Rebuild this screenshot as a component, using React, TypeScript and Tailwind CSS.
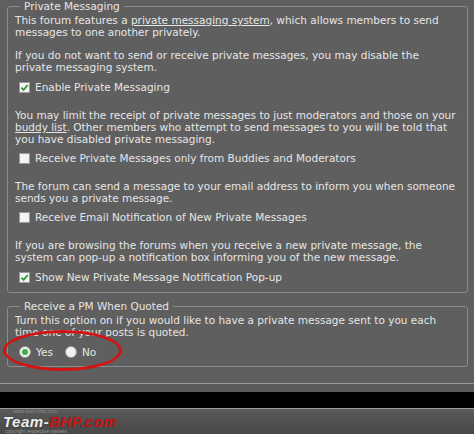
import React from "react";

function Check({ on }: { on?: boolean }) {
  return (
    <span className="inline-flex h-[11px] w-[11px] shrink-0 items-center justify-center border border-[#9a9a9a] bg-[#f4f4f4]">
      {on && (
        <svg viewBox="0 0 10 10" className="h-[9px] w-[9px]">
          <path d="M1.5 5.2 L4 7.6 L8.6 2.2" fill="none" stroke="#2f9a2f" strokeWidth="2" />
        </svg>
      )}
    </span>
  );
}

function Radio({ on }: { on?: boolean }) {
  return (
    <span className="inline-flex h-[12px] w-[12px] shrink-0 items-center justify-center rounded-full border border-[#9a9a9a] bg-[#f2f2f2]">
      {on && <span className="h-[6px] w-[6px] rounded-full bg-[#3fae3f]" />}
    </span>
  );
}

function Option({ on, label }: { on?: boolean; label: string }) {
  return (
    <label className="flex h-[12px] items-center gap-[5px] pl-[4px]">
      <Check on={on} />
      <span>{label}</span>
    </label>
  );
}

function Link({ children }: { children: React.ReactNode }) {
  return <span className="inline-block leading-[12px] underline">{children}</span>;
}

export default function App() {
  return (
    <div
      className="h-[434px] w-[474px] overflow-hidden bg-[#5f5f5f] text-[10.5px] leading-[12px] text-[#e6e6e6]"
      style={{ fontFamily: '"DejaVu Sans", Verdana, sans-serif' }}
    >
      <div className="pl-[7px] pr-[6px]">
        {/* Private Messaging */}
        <fieldset className="rounded-[3px] border border-[#8c8c8c] pb-[9px] pl-[7px] pr-[10px] pt-[2px]">
          <legend className="ml-[5px] px-[4px]">Private Messaging</legend>
          <p>
            This forum features a <Link>private messaging system</Link>, which allows members to send messages to one another privately.
          </p>
          <p className="mt-[11px]">If you do not want to send or receive private messages, you may disable the private messaging system.</p>
          <div className="mt-[8px]">
            <Option on label="Enable Private Messaging" />
          </div>
          <p className="mt-[16px]">
            You may limit the receipt of private messages to just moderators and those on your <Link>buddy list</Link>. Other members who attempt to send messages to you will be told that you have disabled private messaging.
          </p>
          <div className="mt-[7px]">
            <Option label="Receive Private Messages only from Buddies and Moderators" />
          </div>
          <p className="mt-[16px]">The forum can send a message to your email address to inform you when someone sends you a private message.</p>
          <div className="mt-[7px]">
            <Option label="Receive Email Notification of New Private Messages" />
          </div>
          <p className="mt-[16px]">
            If you are browsing the forums when you receive a new private message, the system can pop-up a notification box informing you of the new message.
          </p>
          <div className="mt-[8px]">
            <Option on label="Show New Private Message Notification Pop-up" />
          </div>
        </fieldset>

        {/* Receive a PM When Quoted */}
        <fieldset className="relative mt-[7px] rounded-[3px] border border-[#8c8c8c] pb-[8px] pl-[7px] pr-[10px] pt-[2px]">
          <legend className="ml-[5px] px-[4px]">Receive a PM When Quoted</legend>
          <p>Turn this option on if you would like to have a private message sent to you each time one of your posts is quoted.</p>
          <div className="mt-[8px] flex h-[12px] items-center gap-[12px] pl-[4px]">
            <label className="flex items-center gap-[5px]">
              <Radio on />
              <span>Yes</span>
            </label>
            <label className="flex items-center gap-[5px]">
              <Radio />
              <span>No</span>
            </label>
          </div>
          <span className="pointer-events-none absolute left-[-5px] top-[18px] h-[41px] w-[119px] rounded-[50%] border-[3px] border-[#d41414]" />
        </fieldset>
      </div>

      {/* bottom bars */}
      <div className="mt-[16px] h-[1px] bg-[#9a9a9a]" />
      <div className="h-[8px] bg-[#5a5a5a]" />
      <div className="h-[16px] bg-black" />
      <div className="h-[1px] bg-[#9a9a9a]" />
      <div
        className="flex h-[26px] flex-col border-b border-[#8a8a8a] bg-gradient-to-b from-[#5a5a5a] to-[#474747] pl-[3px] leading-none"
        style={{ fontFamily: '"Liberation Sans", Arial, sans-serif' }}
      >
        <span className="h-[5px] pl-[10px] text-[5px] leading-[5px] text-[#8a8a8a]">www.team-bhp.com</span>
        <span className="h-[15px] text-[15px] font-bold italic leading-[15px] tracking-[0.5px] [text-shadow:0_0_1px_#222]">
          <span className="text-[#f0f0f0]">Team-</span>
          <span className="text-[#c81a1a]">BHP</span>
          <span className="text-[#c81a1a]">.com</span>
        </span>
        <span className="h-[5px] pl-[2px] text-[5px] leading-[5px] text-[#9a9a9a]">copyright respective owners</span>
      </div>
    </div>
  );
}
